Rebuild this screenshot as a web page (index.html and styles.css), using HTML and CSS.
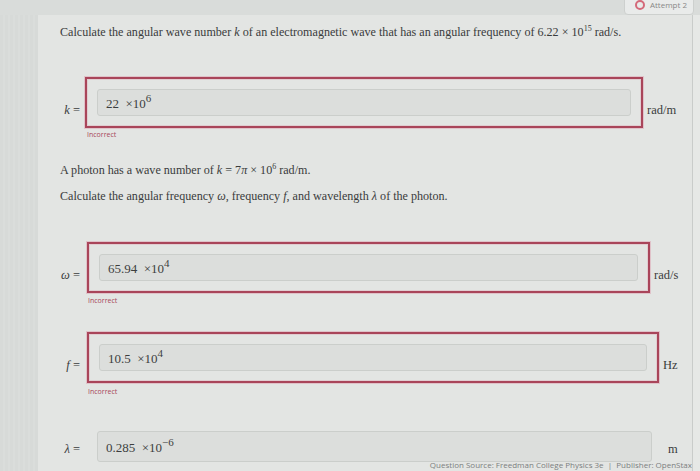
FILE: index.html
```html
<!DOCTYPE html>
<html lang="en">
<head>
    <meta charset="UTF-8">
    <meta name="viewport" content="width=device-width, initial-scale=1.0">
    <title>Physics Homework</title>
    <link rel="stylesheet" href="styles.css">
</head>
<body>
    <div class="topbar">
        <div class="attempt-btn"><span class="attempt-dot"></span>Attempt 2</div>
    </div>

    <div class="page">
        <div class="gutter"></div>

        <div class="card">
            <p class="question q-title">Calculate the angular wave number <i>k</i> of an electromagnetic wave that has an angular frequency of 6.22 &times; 10<sup>15</sup> rad/s.</p>

            <!-- k answer -->
            <div class="answer-row row-k">
                <div class="var-label"><i>k</i> =</div>
                <div class="field wrong">
                    <div class="input-box">22 &nbsp;&times;10<sup>6</sup></div>
                </div>
                <div class="unit">rad/m</div>
            </div>
            <div class="feedback fb-k">Incorrect</div>

            <p class="question q-photon">A photon has a wave number of <i>k</i> = 7<i>&pi;</i> &times; 10<sup>6</sup> rad/m.</p>
            <p class="question q-calc">Calculate the angular frequency <i>&omega;</i>, frequency <i>f</i>, and wavelength <i>&lambda;</i> of the photon.</p>

            <!-- omega answer -->
            <div class="answer-row row-w">
                <div class="var-label"><i>&omega;</i> =</div>
                <div class="field wrong">
                    <div class="input-box">65.94 &nbsp;&times;10<sup>4</sup></div>
                </div>
                <div class="unit">rad/s</div>
            </div>
            <div class="feedback fb-w">Incorrect</div>

            <!-- f answer -->
            <div class="answer-row row-f">
                <div class="var-label"><i>f</i> =</div>
                <div class="field wrong">
                    <div class="input-box">10.5 &nbsp;&times;10<sup>4</sup></div>
                </div>
                <div class="unit">Hz</div>
            </div>
            <div class="feedback fb-f">Incorrect</div>

            <!-- lambda answer -->
            <div class="answer-row row-l">
                <div class="var-label"><i>&lambda;</i> =</div>
                <div class="field">
                    <div class="input-box tall">0.285 &nbsp;&times;10<sup>&minus;6</sup></div>
                </div>
                <div class="unit">m</div>
            </div>

            <p class="source">Question Source: Freedman College Physics 3e &nbsp;|&nbsp; Publisher: OpenStax</p>
        </div>

        <div class="edge"></div>
    </div>
</body>
</html>
```

FILE: styles.css
```css
body {
    margin: 0;
    padding: 0;
    background-color: #dadddb;
    font-family: "Liberation Serif", "Times New Roman", serif;
    color: #3a3c3c;
    overflow: hidden;
}

.topbar {
    height: 15px;
    display: flex;
    justify-content: flex-end;
    background-color: #d9dcda;
    padding-right: 6px;
}

.attempt-btn {
    margin-top: -5px;
    height: 18px;
    padding: 0 6px 0 10px;
    display: flex;
    align-items: center;
    gap: 5px;
    background-color: #e9ebea;
    border: 1px solid #cdd0ce;
    border-radius: 4px;
    font-family: "Open Sans", sans-serif;
    font-size: 8px;
    line-height: 10px;
    color: #888;
    white-space: nowrap;
}

.attempt-dot {
    width: 6px;
    height: 6px;
    border: 2px solid #d46a7a;
    border-radius: 50%;
    flex-shrink: 0;
}

.page {
    display: flex;
    min-height: 456px;
}

.gutter {
    width: 38px;
    flex-shrink: 0;
    background: repeating-linear-gradient(90deg, #d7dad8 0px, #d7dad8 3px, #dadddb 3px, #dadddb 5px);
}

.card {
    width: 632px;
    padding: 9px 0 0 22px;
    background-color: #e3e5e3;
}

.edge {
    flex: 1;
    border-left: 1px solid #c9ccca;
    background-color: #e6e8e6;
}

.question {
    margin: 0;
    font-size: 12.1px;
    line-height: 16px;
}

.question sup {
    font-size: 8px;
    line-height: 0;
}

.q-photon {
    margin-top: 22px;
}

.q-calc {
    margin-top: 10px;
}

.answer-row {
    display: flex;
    align-items: center;
}

.row-k {
    margin-top: 37px;
}

.row-w {
    margin-top: 38px;
}

.row-f {
    margin-top: 26px;
}

.row-l {
    margin-top: 22px;
}

.var-label {
    width: 20px;
    margin-right: 5px;
    padding-top: 16px;
    text-align: right;
    font-size: 12.5px;
    white-space: nowrap;
}

.field {
    padding: 10px;
    border: 2px solid transparent;
}

.field.wrong {
    border-color: #a9455a;
    box-shadow: 0 0 0 1px rgba(222, 160, 175, 0.5), inset 0 0 0 1px rgba(222, 160, 175, 0.35);
}

.row-k .field {
    width: 534px;
}

.row-w .field {
    width: 539px;
    margin-left: 2px;
}

.row-f .field {
    width: 548px;
    margin-left: 2px;
}

.row-l .field {
    width: 555px;
    padding-bottom: 0;
}

.input-box {
    height: 27px;
    padding: 4px 0 0 8px;
    box-sizing: border-box;
    background-color: #dcdedc;
    border: 1px solid #cbcecb;
    border-radius: 3px;
    font-size: 13px;
    line-height: 20px;
    color: #3c3e3e;
}

.input-box.tall {
    height: 31px;
    padding-top: 6px;
}

.input-box sup {
    font-size: 11px;
    line-height: 0;
    position: relative;
    top: -1px;
}

.unit {
    margin-left: 4px;
    padding-top: 16px;
    font-size: 12.5px;
}

.feedback {
    margin-left: 27px;
    font-family: "Open Sans", sans-serif;
    font-size: 7px;
    line-height: 10px;
    color: #a8485a;
}

.fb-k {
    margin-top: 2px;
}

.fb-w {
    margin-top: 3px;
    margin-left: 28px;
}

.fb-f {
    margin-top: 4px;
    margin-left: 28px;
}

.source {
    margin: -4px 0 0 0;
    text-align: right;
    font-family: "Open Sans", sans-serif;
    font-size: 8px;
    line-height: 10px;
    color: #7c7f80;
    white-space: nowrap;
}
```
